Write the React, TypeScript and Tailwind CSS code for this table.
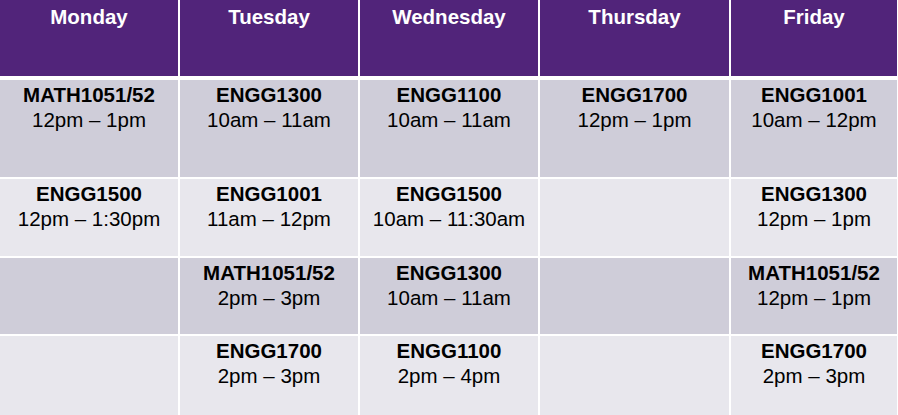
const days = ["Monday", "Tuesday", "Wednesday", "Thursday", "Friday"];

type Slot = { code: string; time: string } | null;

const rows: Slot[][] = [
  [
    { code: "MATH1051/52", time: "12pm – 1pm" },
    { code: "ENGG1300", time: "10am – 11am" },
    { code: "ENGG1100", time: "10am – 11am" },
    { code: "ENGG1700", time: "12pm – 1pm" },
    { code: "ENGG1001", time: "10am – 12pm" },
  ],
  [
    { code: "ENGG1500", time: "12pm – 1:30pm" },
    { code: "ENGG1001", time: "11am – 12pm" },
    { code: "ENGG1500", time: "10am – 11:30am" },
    null,
    { code: "ENGG1300", time: "12pm – 1pm" },
  ],
  [
    null,
    { code: "MATH1051/52", time: "2pm – 3pm" },
    { code: "ENGG1300", time: "10am – 11am" },
    null,
    { code: "MATH1051/52", time: "12pm – 1pm" },
  ],
  [
    null,
    { code: "ENGG1700", time: "2pm – 3pm" },
    { code: "ENGG1100", time: "2pm – 4pm" },
    null,
    { code: "ENGG1700", time: "2pm – 3pm" },
  ],
];

const rowHeights = ["h-[97px]", "h-[77px]", "h-[76px]", "h-[79px]"];
const cols = "grid grid-cols-[178px_178px_178px_189px_166px] gap-x-[2px]";

export default function App() {
  return (
    <div
      className="w-[898px] h-[415px] bg-white pr-px"
      style={{ fontFamily: '"Liberation Sans", Arial, sans-serif' }}
    >
      <div className={`${cols} mb-[4px]`}>
        {days.map((d) => (
          <div
            key={d}
            className="h-[76px] bg-[#51247a] pt-[5px] text-center text-[20.5px] leading-[1.2] font-bold text-white"
          >
            {d}
          </div>
        ))}
      </div>
      <div className="flex flex-col gap-y-[2px]">
        {rows.map((row, i) => (
          <div key={i} className={cols}>
            {row.map((slot, j) => (
              <div
                key={j}
                className={`${rowHeights[i]} ${
                  i % 2 === 0 ? "bg-[#cfcdd9]" : "bg-[#e8e7ed]"
                } pt-[3px] text-center text-[20.5px] leading-[1.2] text-black`}
              >
                {slot && (
                  <>
                    <div className="font-bold">{slot.code}</div>
                    <div>{slot.time}</div>
                  </>
                )}
              </div>
            ))}
          </div>
        ))}
      </div>
    </div>
  );
}
